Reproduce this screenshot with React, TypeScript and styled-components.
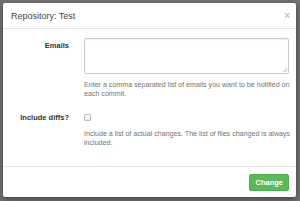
import styled, { createGlobalStyle } from "styled-components";

const Global = createGlobalStyle`
  html, body {
    margin: 0;
    padding: 0;
    background: #727272;
  }
  body {
    font-family: "Liberation Sans", Arial, sans-serif;
    color: #333;
  }
`

const Backdrop = styled.div`
  width: 300px;
  height: 201px;
  padding: 3px 4px 4px 3px;
  box-sizing: border-box;
  background: #727272;
`

const Modal = styled.div`
  width: 293px;
  height: 194px;
  background: #fff;
  border-radius: 2px;
  box-shadow: 0 2px 6px rgba(0, 0, 0, 0.45);
  display: flex;
  flex-direction: column;
  overflow: hidden;
`

const Header = styled.div`
  height: 26px;
  box-sizing: border-box;
  border-bottom: 1px solid #e5e5e5;
  padding: 0 6px 0 8px;
  display: flex;
  align-items: center;
  justify-content: space-between;
`

const Title = styled.h4`
  margin: 0;
  font-size: 9px;
  font-weight: normal;
  color: #444;
`

const Close = styled.span`
  font-size: 10px;
  font-weight: bold;
  color: #000;
  opacity: 0.25;
  line-height: 1;
`

const Body = styled.div`
  flex: 1;
  padding: 9px 7px 0 7px;
  display: grid;
  grid-template-columns: 59px 1fr;
  column-gap: 15px;
  align-content: start;
`

const Label = styled.label<{ $top: number }>`
  text-align: right;
  font-size: 7.5px;
  font-weight: bold;
  color: #333;
  padding-top: ${(p) => p.$top}px;
  line-height: 9px;
  white-space: nowrap;
`

const Field = styled.div<{ $bottom: number }>`
  min-width: 0;
  padding-bottom: ${(p) => p.$bottom}px;
`

const TextArea = styled.div`
  position: relative;
  height: 36px;
  box-sizing: border-box;
  border: 1px solid #ccc;
  border-radius: 2px;
  box-shadow: inset 0 1px 1px rgba(0, 0, 0, 0.06);
`

const Grip = styled.svg`
  position: absolute;
  right: 1px;
  bottom: 1px;
`

const Check = styled.span`
  display: block;
  width: 5px;
  height: 5px;
  margin-top: 1px;
  border: 1px solid #bcbcbc;
  border-radius: 1px;
  background: linear-gradient(#fdfdfd, #ececec);
`

const Help = styled.p<{ $top: number }>`
  margin: ${(p) => p.$top}px -5px 0 0;
  font-size: 7.1px;
  line-height: 9px;
  color: #737373;
`

const Footer = styled.div`
  height: 31px;
  box-sizing: border-box;
  border-top: 1px solid #e5e5e5;
  padding: 0 7px;
  display: flex;
  align-items: center;
  justify-content: flex-end;
`

const Button = styled.button`
  height: 17px;
  padding: 0 5px;
  border: 1px solid #4cae4c;
  border-radius: 2px;
  background: #5cb85c;
  color: #fff;
  font-family: "Liberation Sans", Arial, sans-serif;
  font-size: 7.5px;
  font-weight: bold;
`

export default function App() {
  return (
    <>
      <Global />
      <Backdrop>
        <Modal>
          <Header>
            <Title>Repository: Test</Title>
            <Close>×</Close>
          </Header>
          <Body>
            <Label $top={3}>Emails</Label>
            <Field $bottom={14}>
              <TextArea>
                <Grip width="4" height="4" viewBox="0 0 4 4">
                  <path d="M4 0L0 4M4 2L2 4" stroke="#999" strokeWidth="0.6" />
                </Grip>
              </TextArea>
              <Help $top={7}>
                Enter a comma separated list of emails you want to be notified on each commit.
              </Help>
            </Field>
            <Label $top={0}>Include diffs?</Label>
            <Field $bottom={0}>
              <Check />
              <Help $top={9}>
                Include a list of actual changes. The list of files changed is always included.
              </Help>
            </Field>
          </Body>
          <Footer>
            <Button>Change</Button>
          </Footer>
        </Modal>
      </Backdrop>
    </>
  )
}
